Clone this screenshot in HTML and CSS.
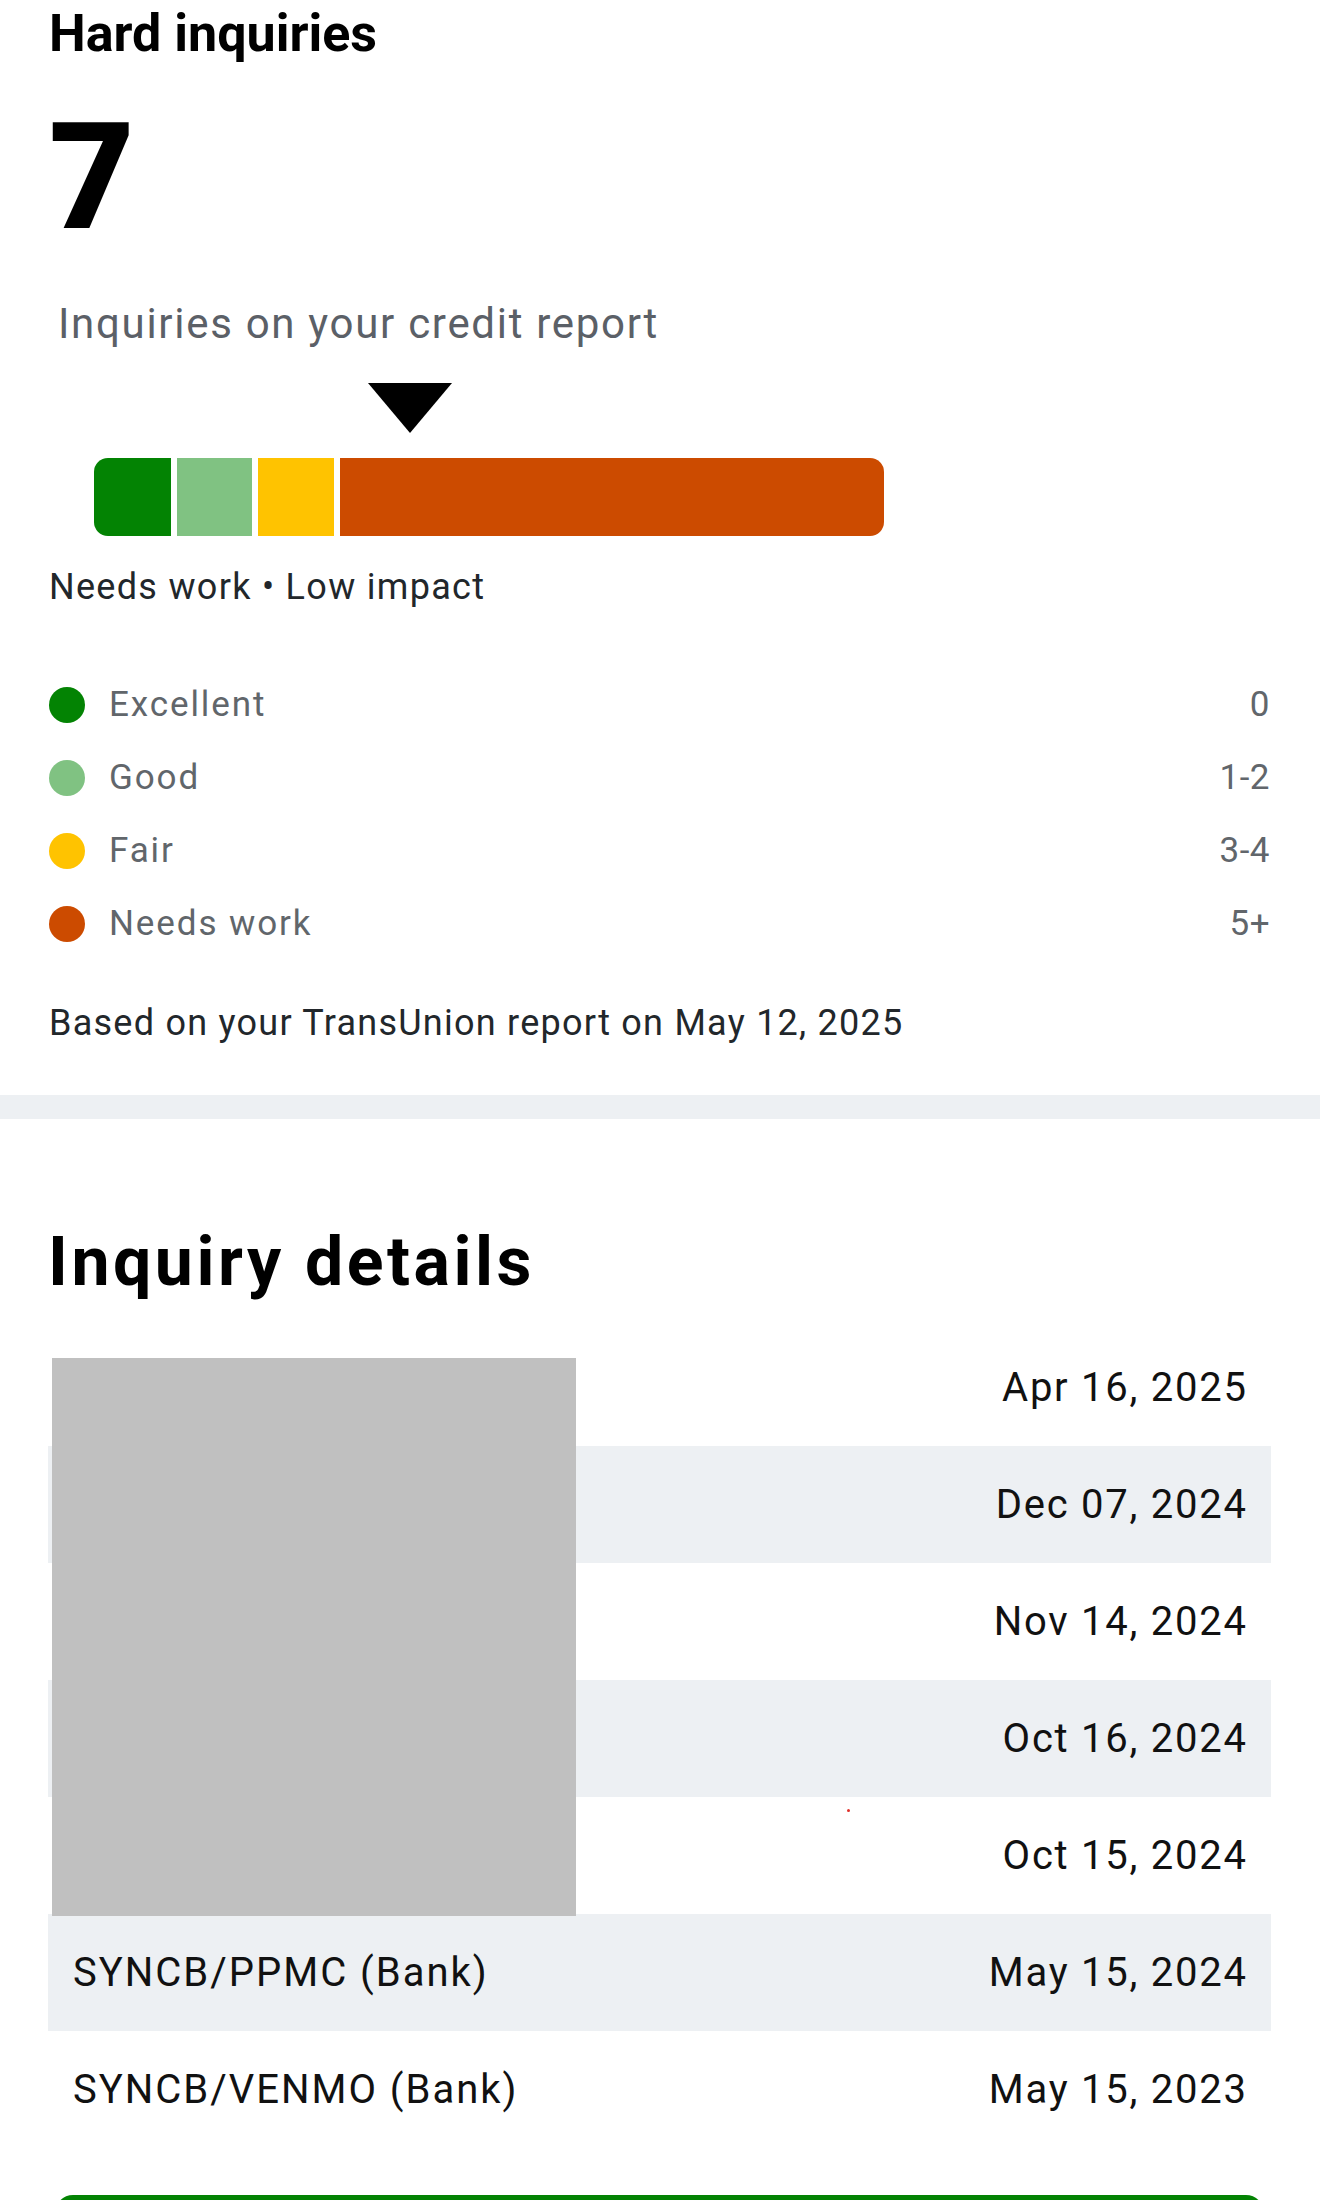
FILE: index.html
```html
<!DOCTYPE html>
<html lang="en">
<head>
<meta charset="utf-8">
<title>Hard inquiries</title>
<link rel="stylesheet" href="styles.css">
</head>
<body>
<section class="summary">
  <h1 class="title">Hard inquiries</h1>
  <div class="count">7</div>
  <p class="subtitle">Inquiries on your credit report</p>
  <div class="marker"></div>
  <div class="bar">
    <div class="seg seg-excellent"></div>
    <div class="seg seg-good"></div>
    <div class="seg seg-fair"></div>
    <div class="seg seg-needs"></div>
  </div>
  <p class="status">Needs work • Low impact</p>
  <ul class="legend">
    <li class="legend-row"><span class="dot dot-excellent"></span><span class="legend-label">Excellent</span><span class="legend-value">0</span></li>
    <li class="legend-row"><span class="dot dot-good"></span><span class="legend-label">Good</span><span class="legend-value">1-2</span></li>
    <li class="legend-row"><span class="dot dot-fair"></span><span class="legend-label">Fair</span><span class="legend-value">3-4</span></li>
    <li class="legend-row"><span class="dot dot-needs"></span><span class="legend-label">Needs work</span><span class="legend-value">5+</span></li>
  </ul>
  <p class="source">Based on your TransUnion report on May 12, 2025</p>
</section>
<div class="divider"></div>
<section class="details">
  <h2 class="details-title">Inquiry details</h2>
  <div class="table">
    <div class="row"><span class="name"></span><span class="date">Apr 16, 2025</span></div>
    <div class="row alt"><span class="name"></span><span class="date">Dec 07, 2024</span></div>
    <div class="row"><span class="name"></span><span class="date">Nov 14, 2024</span></div>
    <div class="row alt"><span class="name"></span><span class="date">Oct 16, 2024</span></div>
    <div class="row"><span class="name"></span><span class="date">Oct 15, 2024</span></div>
    <div class="row alt"><span class="name">SYNCB/PPMC (Bank)</span><span class="date">May 15, 2024</span></div>
    <div class="row"><span class="name">SYNCB/VENMO (Bank)</span><span class="date">May 15, 2023</span></div>
    <div class="redaction"></div>
    <div class="speck"></div>
  </div>
  <div class="button"></div>
</section>
</body>
</html>
```
FILE: styles.css
```css
* { box-sizing: border-box; }
html, body { margin: 0; padding: 0; background: #ffffff; }
body {
  font-family: Roboto, "Liberation Sans", Arial, sans-serif;
  color: #1f2428;
  width: 1320px;
  overflow: hidden;
}

.summary { padding: 4px 49px 0 49px; }

.title {
  margin: 0;
  font-size: 52px;
  line-height: 60px;
  font-weight: 700;
  color: #000;
}

.count {
  margin-top: 39px;
  font-size: 148px;
  line-height: 150px;
  font-weight: 900;
  color: #000;
}

.subtitle {
  margin: 46px 0 0 0;
  padding-left: 9px;
  font-size: 42px;
  line-height: 50px;
  letter-spacing: 1.7px;
  color: #5b6067;
}

.marker {
  margin: 34px 0 0 319px;
  width: 0;
  height: 0;
  border-left: 42px solid transparent;
  border-right: 42px solid transparent;
  border-top: 50px solid #000;
}

.bar {
  margin: 25px 0 0 45px;
  width: 790px;
  height: 78px;
  display: flex;
  gap: 6px;
  border-radius: 14px;
  overflow: hidden;
}
.seg { height: 100%; }
.seg-excellent { width: 77px; background: #038303; }
.seg-good { width: 75px; background: #80c282; }
.seg-fair { width: 76px; background: #ffc300; }
.seg-needs { flex: 1; background: #cc4b00; }

.status {
  margin: 29px 0 0 0;
  font-size: 36px;
  line-height: 44px;
  letter-spacing: 1.3px;
  color: #22272b;
}

.legend {
  list-style: none;
  margin: 59px 0 0 0;
  padding: 0;
}
.legend-row {
  height: 73px;
  display: flex;
  align-items: center;
  font-size: 35px;
  letter-spacing: 1.9px;
  color: #61666b;
}
.dot {
  width: 36px;
  height: 36px;
  border-radius: 50%;
  flex: none;
  margin-right: 24px;
}
.dot-excellent { background: #038303; }
.dot-good { background: #80c282; }
.dot-fair { background: #ffc300; }
.dot-needs { background: #cc4b00; }
.legend-label { flex: 1; }
.legend-value { letter-spacing: 0.5px; margin-right: 1px; }

.source {
  margin: 41px 0 0 0;
  font-size: 36px;
  line-height: 44px;
  letter-spacing: 1.25px;
  color: #22272b;
}

.divider {
  margin-top: 50px;
  height: 24px;
  background: #edf0f3;
}

.details { padding: 0 49px 0 48px; }

.details-title {
  margin: 103px 0 0 0;
  font-size: 68px;
  line-height: 80px;
  font-weight: 700;
  letter-spacing: 3.5px;
  color: #000;
}

.table {
  position: relative;
  margin-top: 27px;
}
.row {
  height: 117px;
  display: flex;
  align-items: center;
  justify-content: space-between;
  padding: 0 25px;
  font-size: 40px;
  color: #111;
}
.row.alt { background: #edf0f3; }
.name { letter-spacing: 2px; }
.date { letter-spacing: 1.75px; margin-right: -1.75px; }

.redaction {
  position: absolute;
  left: 4px;
  top: 29px;
  width: 524px;
  height: 558px;
  background: #c0c0c0;
}
.speck {
  position: absolute;
  left: 799px;
  top: 480px;
  width: 3px;
  height: 3px;
  border-radius: 50%;
  background: #e0302a;
}

.button {
  margin: 47px 7px 0 7px;
  height: 100px;
  border-radius: 18px;
  background: #038303;
}
```
